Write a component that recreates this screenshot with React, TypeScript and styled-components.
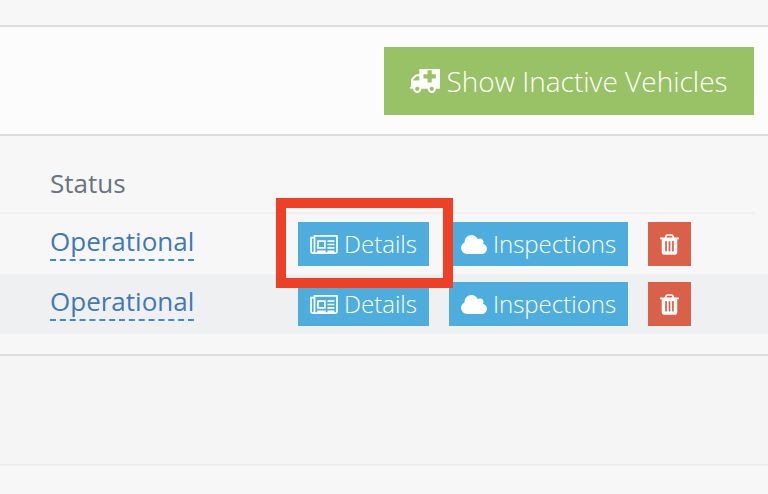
import React from "react";
import styled, { createGlobalStyle } from "styled-components";

const GlobalStyle = createGlobalStyle`
  html, body {
    margin: 0;
    padding: 0;
    background: #f7f7f7;
  }

  body {
    font-family: "Open Sans", sans-serif;
  }
`;

const Page = styled.div`
  width: 768px;
  height: 494px;
  overflow: hidden;
  position: relative;
  padding-top: 25px;
  box-sizing: border-box;
`;

const Toolbar = styled.div`
  height: 107px;
  border-top: 2px solid #dddddd;
  border-bottom: 2px solid #dddddd;
  background: #fcfcfc;
  display: flex;
  justify-content: flex-end;
  align-items: center;
  padding-right: 14px;
`;

const ShowButton = styled.button`
  width: 370px;
  height: 68px;
  border: 0;
  padding: 0;
  background: #99c165;
  color: #ffffff;
  display: flex;
  align-items: center;
  justify-content: center;
  gap: 6px;
  font-family: "Open Sans", sans-serif;
  font-weight: 300;
  font-size: 28px;
`;

const TableArea = styled.div`
  height: 220px;
  box-sizing: border-box;
  border-bottom: 2px solid #dddddd;
`;

const HeaderRow = styled.div`
  height: 78px;
  margin-right: 13px;
  box-sizing: border-box;
  border-bottom: 2px solid #efefef;
  padding-left: 50px;
  padding-top: 28px;
  font-size: 26px;
  line-height: 38px;
  color: #6b7280;
`;

const Row = styled.div<{ $striped?: boolean }>`
  height: 60px;
  background: ${({ $striped }) => ($striped ? "#eff0f2" : "#f7f7f7")};
  display: grid;
  grid-template-columns: 278px 131px 179px 43px;
  column-gap: 20px;
  align-items: center;
`;

const StatusCell = styled.div`
  padding-left: 50px;
  margin-bottom: 3px;
`;

const StatusLink = styled.a`
  font-size: 26px;
  line-height: 33px;
  display: inline-block;
  padding-bottom: 1px;
  color: #4178b5;
  border-bottom: 2px dashed #3d8bd8;
`;

const ActionButton = styled.button<{ $bg: string }>`
  height: 44px;
  width: 100%;
  border: 0;
  padding: 0;
  background: ${({ $bg }) => $bg};
  color: #ffffff;
  display: flex;
  align-items: center;
  justify-content: center;
  gap: 6px;
  font-family: "Open Sans", sans-serif;
  font-weight: 300;
  font-size: 24px;
`;

const ActionLabel = styled.span`
  margin-bottom: 2px;
`;

const Footer = styled.div`
  height: 108px;
  background: #f5f5f5;
  border-bottom: 1px solid #ebebeb;
  box-shadow: 0 1px 2px rgba(0, 0, 0, 0.03);
`;

const Highlight = styled.div`
  position: absolute;
  left: 276px;
  top: 198px;
  width: 157px;
  height: 70px;
  border: 10px solid #ee4026;
`;

// Font Awesome 4 glyphs
const Icon = styled.svg`
  display: block;
  flex-shrink: 0;
  fill: currentColor;
`;

const Ambulance = () => (
  <Icon width="30" height="24" viewBox="0 128 1856 1472">
    <path d="M576 1344q0-53-37.500-90.500t-90.500-37.500-90.500 37.500-37.500 90.500 37.500 90.500 90.500 37.500 90.500-37.500 37.500-90.500zm-384-512h384v-256h-158q-13 0-22 9l-195 195q-9 9-9 22v30zm1280 512q0-53-37.500-90.500t-90.500-37.500-90.500 37.500-37.500 90.500 37.500 90.500 90.500 37.500 90.500-37.500 37.500-90.500zm128-672v-192q0-14-9-23t-23-9h-224v-224q0-14-9-23t-23-9h-192q-14 0-23 9t-9 23v224h-224q-14 0-23 9t-9 23v192q0 14 9 23t23 9h224v224q0 14 9 23t23 9h192q14 0 23-9t9-23v-224h224q14 0 23-9t9-23zm256-544v1152q0 26-19 45t-45 19h-192q0 106-75 181t-181 75-181-75-75-181h-384q0 106-75 181t-181 75-181-75-75-181h-128q-26 0-45-19t-19-45 19-45 45-19v-416q0-26 13-58t32-51l198-198q19-19 51-32t58-13h160v-320q0-26 19-45t45-19h1152q26 0 45 19t19 45z" />
  </Icon>
);

const Newspaper = () => (
  <Icon width="28" height="19" viewBox="0 0 2048 1408">
    <path d="M1024 512h-384v384h384v-384zm128 640v128h-640v-128h640zm0-768v640h-640v-640h640zm640 768v128h-512v-128h512zm0-256v128h-512v-128h512zm0-256v128h-512v-128h512zm0-256v128h-512v-128h512zm-1536 832v-960h-128v960q0 26 19 45t45 19 45-19 19-45zm1664 0v-1088h-1536v1088q0 33-11 64h1483q26 0 45-19t19-45zm128-1216v1216q0 80-56 136t-136 56h-1664q-80 0-136-56t-56-136v-1088h256v-128h1792z" />
  </Icon>
);

const Cloud = () => (
  <Icon width="26" height="19" viewBox="0 64 1920 1408">
    <path d="M1920 1088q0 159-112.500 271.500t-271.500 112.500h-1088q-185 0-316.500-131.500t-131.500-316.500q0-132 71-241.500t187-163.500q-2-28-2-43 0-212 150-362t362-150q158 0 286.500 88t187.500 230q70-62 166-62 106 0 181 75t75 181q0 75-41 138 129 30 213 134.500t84 239.500z" />
  </Icon>
);

const Trash = () => (
  <Icon width="19" height="21" viewBox="192 128 1408 1536">
    <path d="M704 1376v-704q0-14-9-23t-23-9h-64q-14 0-23 9t-9 23v704q0 14 9 23t23 9h64q14 0 23-9t9-23zm256 0v-704q0-14-9-23t-23-9h-64q-14 0-23 9t-9 23v704q0 14 9 23t23 9h64q14 0 23-9t9-23zm256 0v-704q0-14-9-23t-23-9h-64q-14 0-23 9t-9 23v704q0 14 9 23t23 9h64q14 0 23-9t9-23zm-544-992h448l-48-117q-7-9-17-11h-317q-10 2-17 11zm928 32v64q0 14-9 23t-23 9h-96v948q0 83-47 143.500t-113 60.500h-832q-66 0-113-58.500t-47-141.500v-952h-96q-14 0-23-9t-9-23v-64q0-14 9-23t23-9h309l70-167q15-37 54-63t79-26h320q40 0 79 26t54 63l70 167h309q14 0 23 9t9 23z" />
  </Icon>
);

const rows = [false, true];

export default function App() {
  return (
    <>
      <GlobalStyle />
      <Page>
        <Toolbar>
          <ShowButton>
            <Ambulance />
            Show Inactive Vehicles
          </ShowButton>
        </Toolbar>
        <TableArea>
          <HeaderRow>Status</HeaderRow>
          {rows.map((striped, idx) => (
            <Row key={idx} $striped={striped}>
              <StatusCell>
                <StatusLink>Operational</StatusLink>
              </StatusCell>
              <ActionButton $bg="#4fadde">
                <Newspaper />
                <ActionLabel>Details</ActionLabel>
              </ActionButton>
              <ActionButton $bg="#4fadde">
                <Cloud />
                <ActionLabel>Inspections</ActionLabel>
              </ActionButton>
              <ActionButton $bg="#d9614a">
                <Trash />
              </ActionButton>
            </Row>
          ))}
        </TableArea>
        <Footer />
        <Highlight />
      </Page>
    </>
  );
}
